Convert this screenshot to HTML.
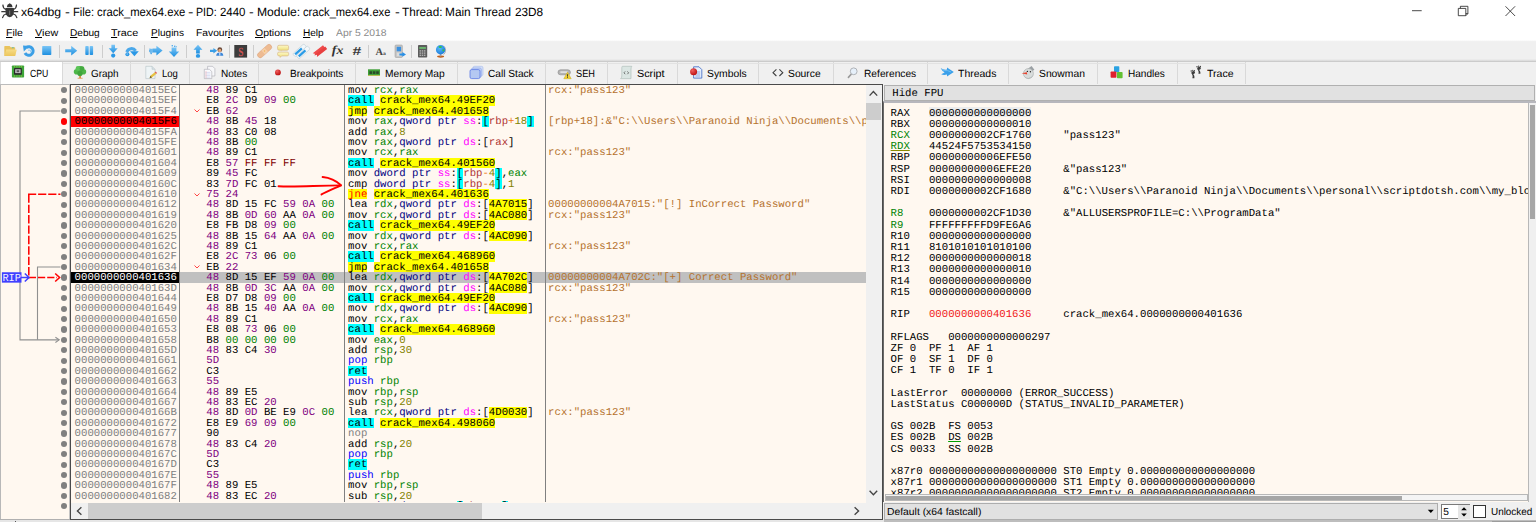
<!DOCTYPE html>
<html lang="en"><head><meta charset="utf-8"><title>x64dbg</title>
<style>
html,body{margin:0;padding:0}
body{width:1536px;height:522px;overflow:hidden;position:relative;background:#fff;text-rendering:geometricPrecision;font-family:"Liberation Sans","DejaVu Sans",sans-serif;color:#000}
div,span,svg{position:absolute}
.mi,.tt,.fx,.tw{transform-origin:0 0}
.tw{top:5px;font-size:12px;line-height:14px}
.m span,.rg span,.ui span{position:static}
.ui{white-space:pre;font-family:"Liberation Sans","DejaVu Sans",sans-serif}
.m{font-family:"Liberation Mono","DejaVu Sans Mono",monospace;font-size:10.667px;line-height:12.4px;height:10.4px;white-space:pre}
.rg{font-family:"Liberation Mono","DejaVu Sans Mono",monospace;font-size:10.667px;line-height:14.6px;height:11.2px;white-space:pre;left:890.6px}
.ad{left:74.6px;color:#808080}
.by{color:#000}
.ds{left:348.1px}
.co{left:548.1px;color:#b5722d}
.r{color:#008300}.z{color:#000080}.g{color:#ff00ff}.v{color:#828200}
.mb{color:#b03434}.mo{color:#f27711}.p{color:#0000ff}.n{color:#808080}
.cc,.ya,.yj,.yc,.sb{display:inline-block;height:10.4px;vertical-align:top}
.cc,.sb{background:#00ffff}.ya,.yj,.yc{background:#ffff00}.yc{color:#ff0000}
.b0{color:#008000}.bf{color:#800000}.bp{color:#800080}
.dot{width:6.2px;height:6.2px;border-radius:50%;background:#808080;left:61.3px}
.vl{width:0.9px;background:#808080}
.sep{width:0.9px;height:12.6px;top:45px;background:#cdcdcd}
.tab{top:62.2px;height:21.4px;border-right:0.8px solid #d9d9d9;box-sizing:border-box}
.tt{top:68.7px;font-size:10.4px;line-height:12px;white-space:pre}
.mi{top:27.9px;font-size:9.8px;line-height:12px;white-space:pre}
.mi u{text-decoration:underline;text-underline-offset:1px}
</style></head><body>
<div style="left:0;top:0;width:1536px;height:40.2px;background:#fff"></div>
<svg style="left:1px;top:2px" width="18" height="17" viewBox="1 2 18 17"><g stroke="#383838" stroke-width="1.25" fill="none" stroke-linecap="round"><path d="M6 9.4 Q3 8.6 2.9 5 M13.4 9.4 Q16.4 8.6 16.5 5 M5.4 11.7 H1.8 M14 11.7 H17.7 M6 14 Q3.4 14.6 2.6 17.6 M13.4 14 Q16 14.6 16.8 17.6"/></g><path d="M9.7 3.2 Q12.6 4.4 12.6 7.2 H6.8 Q6.8 4.4 9.7 3.2 Z" fill="#383838"/><path d="M5.5 8 H13.9 Q14.2 12 13.4 14.6 Q12 17.2 9.7 17.2 Q7.4 17.2 6 14.6 Q5.2 12 5.5 8 Z" fill="#383838"/><path d="M9.7 10.6 V15" stroke="#9a9a9a" stroke-width="0.7"/></svg>
<div class="ui tw" id="tw0" style="transform:scaleX(1.018);left:20.9px">x64dbg</div><div class="ui tw" id="tw1" style="transform:scaleX(1.225);left:64.9px">-</div><div class="ui tw" id="tw2" style="transform:scaleX(0.931);left:72.6px">File:</div><div class="ui tw" id="tw3" style="transform:scaleX(0.939);left:96.7px">crack_mex64.exe</div><div class="ui tw" id="tw4" style="transform:scaleX(1.350);left:188.0px">-</div><div class="ui tw" id="tw5" style="transform:scaleX(0.887);left:196.1px">PID:</div><div class="ui tw" id="tw6" style="transform:scaleX(0.955);left:220.0px">2440</div><div class="ui tw" id="tw7" style="transform:scaleX(1.175);left:249.3px">-</div><div class="ui tw" id="tw8" style="transform:scaleX(1.012);left:257.0px">Module:</div><div class="ui tw" id="tw9" style="transform:scaleX(0.929);left:303.2px">crack_mex64.exe</div><div class="ui tw" id="tw10" style="transform:scaleX(1.200);left:395.0px">-</div><div class="ui tw" id="tw11" style="transform:scaleX(0.977);left:402.4px">Thread:</div><div class="ui tw" id="tw12" style="transform:scaleX(0.988);left:445.4px">Main</div><div class="ui tw" id="tw13" style="transform:scaleX(0.973);left:474.1px">Thread</div><div class="ui tw" id="tw14" style="transform:scaleX(0.980);left:514.5px">23D8</div>
<svg style="left:1400px;top:0" width="136" height="24" viewBox="0 0 136 24"><g stroke="#2b2b2b" stroke-width="0.85" fill="none"><path d="M12 10.7 H21.7"/><path d="M58.3 8.4 H65.8 V15.7 H58.3 Z"/><path d="M60.4 8.4 V6.3 H67.9 V13.6 H65.8 M65.8 15.7 L67.9 13.6"/><path d="M105.5 6.3 L115.1 16 M115.1 6.3 L105.5 16"/></g></svg>
<div class="mi" id="mi0" style="transform:scaleX(1.070);left:5.8px"><u>F</u>ile</div><div class="mi" id="mi1" style="transform:scaleX(1.101);left:34.7px"><u>V</u>iew</div><div class="mi" id="mi2" style="transform:scaleX(1.029);left:70.0px"><u>D</u>ebug</div><div class="mi" id="mi3" style="transform:scaleX(1.102);left:111.2px"><u>T</u>race</div><div class="mi" id="mi4" style="transform:scaleX(1.026);left:150.7px"><u>P</u>lugins</div><div class="mi" id="mi5" style="transform:scaleX(1.049);left:195.7px">Favour<u>i</u>tes</div><div class="mi" id="mi6" style="transform:scaleX(1.066);left:255.2px"><u>O</u>ptions</div><div class="mi" id="mi7" style="transform:scaleX(1.027);left:302.7px"><u>H</u>elp</div><div class="mi" id="mi8" style="transform:scaleX(1.056);left:336px;color:#8a8a8a">Apr 5 2018</div>
<div style="left:0;top:39.6px;width:1536px;height:21.6px;background:linear-gradient(#fff,#f0f0f0 1.6px)"></div>
<div style="left:0;top:59.4px;width:1536px;height:2.8px;background:linear-gradient(#f0f0f0,#dcdcdc 55%,#c9c9c9 80%,#d4d4d4)"></div>
<div class="sep" style="left:58.6px"></div><div class="sep" style="left:101.6px"></div><div class="sep" style="left:143.6px"></div><div class="sep" style="left:186.1px"></div><div class="sep" style="left:229.0px"></div><div class="sep" style="left:253.1px"></div><div class="sep" style="left:368.0px"></div><div class="sep" style="left:411.1px"></div>
<svg style="left:0;top:40px" width="460" height="22" viewBox="0 40 460 22"><defs>
<linearGradient id="gb" x1="0" y1="0" x2="0" y2="1"><stop offset="0" stop-color="#7cc6f6"/><stop offset="1" stop-color="#1d8fe0"/></linearGradient>
<linearGradient id="gy" x1="0" y1="0" x2="0" y2="1"><stop offset="0" stop-color="#f7dc86"/><stop offset="1" stop-color="#ecc65c"/></linearGradient>
<linearGradient id="gn" x1="0" y1="0" x2="0" y2="1"><stop offset="0" stop-color="#fdf8c8"/><stop offset="1" stop-color="#efe07a"/></linearGradient>
<radialGradient id="gr" cx="0.35" cy="0.3" r="0.8"><stop offset="0" stop-color="#f06060"/><stop offset="1" stop-color="#b80808"/></radialGradient>
<radialGradient id="gg" cx="0.4" cy="0.35" r="0.8"><stop offset="0" stop-color="#55b8f8"/><stop offset="1" stop-color="#1270d8"/></radialGradient>
</defs><path d="M4.3 46.6 Q4.3 46 5 46 H9.6 L10.8 47.2 H14.6 Q15.2 47.2 15.2 47.8 V55.4 Q15.2 55.9 14.6 55.9 H5 Q4.3 55.9 4.3 55.4 Z" fill="#e9c35c"/><path d="M6.2 49.4 H16.3 Q16.9 49.4 16.7 50 L15.3 55.5 Q15.2 55.9 14.6 55.9 H4.6 Z" fill="url(#gy)"/><rect x="11.8" y="47.3" width="2" height="0.9" fill="#58b8a8"/><path d="M26.2 47.6 A4.3 4.3 0 1 1 25 53" fill="none" stroke="#3b9fe6" stroke-width="3"/><path d="M23 45.4 L29.4 46 L23.8 51.4 Z" fill="#3b9fe6"/><path d="M28 50.2 H30.6 V52.4" fill="none" stroke="#8cc8f4" stroke-width="1"/><rect x="42.2" y="45.9" width="9.1" height="9.1" rx="0.7" fill="url(#gb)"/><path d="M65.2 49.2 H71.2 V45.8 L77.2 50.7 L71.2 55.6 V52.3 H65.2 Z" fill="url(#gb)"/><rect x="85.3" y="45.9" width="3.4" height="9.1" rx="0.8" fill="url(#gb)"/><rect x="89.7" y="45.9" width="3.4" height="9.1" rx="0.8" fill="url(#gb)"/><path d="M111.4 44.8 H115 V48.3 H117.7 L113.2 53.2 L108.7 48.3 H111.4 Z" fill="url(#gb)"/><circle cx="113.2" cy="55.6" r="2.1" fill="#2a98e6"/><path d="M126.8 52 A5 5 0 0 1 135.6 50.8" fill="none" stroke="#4aa8ea" stroke-width="3.2"/><path d="M130 51.2 H138.8 L134.4 56.2 Z" fill="#2a98e6"/><circle cx="127.4" cy="54.3" r="2" fill="#2a98e6"/><circle cx="127.2" cy="54" r="0.8" fill="#8cc8f4"/><path d="M152.5 48.6 H156.4 V45.7 L162.6 50.6 L156.4 55.5 V52.6 H152.5 Z" fill="url(#gb)"/><path d="M149.2 48.4 L152.8 49 V52.4 L150 53.4 Z" fill="#58b0ee" opacity="0.85"/><rect x="149" y="50.4" width="1.2" height="1.2" fill="#3b9fe6"/><rect x="150.6" y="53" width="1.2" height="1.2" fill="#3b9fe6"/><path d="M171.6 47.4 H176.4 V51.4 H179.2 L174 57 L168.8 51.4 H171.6 Z" fill="url(#gb)"/><rect x="171.6" y="45" width="1.4" height="1.4" fill="#58b0ee"/><rect x="174" y="45.6" width="1.4" height="1.4" fill="#58b0ee"/><rect x="175.8" y="46.2" width="1" height="1" fill="#58b0ee"/><path d="M198 44.7 L202.4 49.7 H199.8 V53.4 H196.1 V49.7 H193.5 Z" fill="url(#gb)"/><ellipse cx="198" cy="55.9" rx="2.2" ry="1.9" fill="#2a98e6"/><path d="M210 49.8 H213.4 V48 L217.2 50.8 L213.4 53.5 V51.9 H210 Z" fill="#3b9fe6"/><path d="M216.2 55.8 Q216.2 52.4 219.8 52.4 Q223.3 52.4 223.3 55.8 Z" fill="#3b86d8"/><circle cx="219.8" cy="49.7" r="2.4" fill="#6a4a3a"/><ellipse cx="219.8" cy="50.5" rx="1.5" ry="1.8" fill="#e8a878"/><rect x="219.3" y="52.6" width="1" height="3" fill="#e8eef8"/><rect x="234.3" y="45" width="12.8" height="12.6" fill="#3c3c3c"/><text x="238.2" y="56" font-family="'Liberation Serif','DejaVu Serif',serif" font-weight="bold" font-size="12.5" fill="#cf5252" textLength="5.2" lengthAdjust="spacingAndGlyphs">S</text><g transform="rotate(-42 264.6 51.1)"><rect x="256" y="48.4" width="17.2" height="5.4" rx="2.7" fill="#eebb92" stroke="#d9a077" stroke-width="0.5"/><rect x="262.6" y="48.6" width="4" height="5" fill="#f6cfa8"/><rect x="264" y="50.4" width="1.2" height="1.2" fill="#f0b040"/></g><rect x="277.6" y="45.3" width="11" height="4.9" rx="1.4" fill="url(#gn)" stroke="#d9b98a" stroke-width="0.7"/><path d="M279 52.1 H287.2 Q288.6 52.1 288.6 53.4 V54.6 Q288.6 55.9 287.2 55.9 H281.6 L280.2 57.4 L280 55.9 H279 Q277.6 55.9 277.6 54.6 V53.4 Q277.6 52.1 279 52.1 Z" fill="url(#gn)" stroke="#d9b98a" stroke-width="0.7"/><path d="M280.4 50.2 L281 51.6 L282.4 50.2 Z" fill="#e6cf90"/><g transform="rotate(-42 299.6 50.4)"><rect x="292" y="48.3" width="15.2" height="4.2" rx="1.4" fill="#f2f7fa" stroke="#b4c6d0" stroke-width="0.5"/><rect x="293.6" y="49.3" width="9" height="2.2" fill="#2a9be6"/></g><g transform="rotate(-42 303.2 52.4)"><rect x="295.6" y="50.3" width="15.2" height="4.2" rx="1.4" fill="#f2f7fa" stroke="#b4c6d0" stroke-width="0.5"/><rect x="297.2" y="51.3" width="9" height="2.2" fill="#2a9be6"/></g><g transform="rotate(-38 319 50.6)"><path d="M312.4 48.9 H325.4 V52.1 H312.4 L313.8 50.5 Z" fill="#ee4a4a"/></g><g transform="rotate(-38 321.2 51.8)"><path d="M314.6 50.1 H327.6 V53.3 H314.6 L316 51.7 Z" fill="#e84040"/></g><text x="331.8" y="54.3" font-family="'Liberation Serif','DejaVu Serif',serif" font-style="italic" font-weight="bold" font-size="12" fill="#333" textLength="11.6" lengthAdjust="spacingAndGlyphs">fx</text><text x="352.2" y="55.3" font-family="'Liberation Sans','DejaVu Sans',sans-serif" font-style="italic" font-weight="bold" font-size="11.6" fill="#3a3a3a" textLength="8.8" lengthAdjust="spacingAndGlyphs">#</text><text x="375.6" y="54.7" font-family="'Liberation Serif','DejaVu Serif',serif" font-weight="bold" font-size="10.4" fill="#444">A</text><text x="383" y="54.7" font-family="'Liberation Serif','DejaVu Serif',serif" font-weight="bold" font-size="5.6" fill="#444">a</text><rect x="395" y="45" width="7.4" height="12.5" rx="1" fill="#c4c4c4" stroke="#9a9a9a" stroke-width="0.5"/><rect x="396.7" y="46.8" width="4.4" height="4.5" fill="#3a90e0"/><rect x="396.8" y="52.6" width="4" height="3.6" fill="#dcdcdc"/><path d="M399.4 53.4 H402.4 V52 L406 54.4 L402.4 56.8 V55.4 H399.4 Z" fill="#2a90e6"/><rect x="418" y="45" width="9.2" height="12.5" rx="0.8" fill="#5c5c5c"/><rect x="419.3" y="47.1" width="6.6" height="1.7" fill="#6cc070"/><rect x="419.5" y="50.2" width="1.5" height="1.4" fill="#b0b0b0"/><rect x="421.7" y="50.2" width="1.5" height="1.4" fill="#b0b0b0"/><rect x="423.9" y="50.2" width="1.5" height="1.4" fill="#b0b0b0"/><rect x="419.5" y="52.4" width="1.5" height="1.4" fill="#b0b0b0"/><rect x="421.7" y="52.4" width="1.5" height="1.4" fill="#b0b0b0"/><rect x="423.9" y="52.4" width="1.5" height="1.4" fill="#b0b0b0"/><rect x="419.5" y="54.6" width="1.5" height="1.4" fill="#b0b0b0"/><rect x="421.7" y="54.6" width="1.5" height="1.4" fill="#b0b0b0"/><rect x="423.9" y="54.6" width="1.5" height="1.4" fill="#b0b0b0"/><path d="M443.2 45.6 A5.6 5.6 0 0 1 443.6 54.6" fill="none" stroke="#b0b0b0" stroke-width="0.9"/><ellipse cx="440.6" cy="56.6" rx="3.5" ry="1.1" fill="#c0601c"/><rect x="439.8" y="54" width="1.6" height="2.4" fill="#a0a0a0"/><circle cx="440.6" cy="49.7" r="4.7" fill="url(#gg)"/><path d="M438.6 46.2 Q441 45.4 442.2 46.8 Q441.6 48.4 439.8 48 Q438.4 47.6 438.6 46.2 Z M442.6 49 Q444.4 49 444.4 50.6 Q443.6 52 442.4 51 Z" fill="#30c050"/></svg>

<div style="left:0;top:62.2px;width:1536px;height:22.5px;background:#f0f0f0"></div>
<div style="left:0;top:83.7px;width:883px;height:0.8px;background:#bcbcbc"></div>
<div class="tab" style="left:0px;width:62.5px;background:#fff"></div><div class="tab" style="left:62.5px;width:68.7px;background:#f0f0f0"></div><div class="tab" style="left:131.2px;width:59.3px;background:#f0f0f0"></div><div class="tab" style="left:190.5px;width:68.5px;background:#f0f0f0"></div><div class="tab" style="left:259px;width:96.5px;background:#f0f0f0"></div><div class="tab" style="left:355.5px;width:102.0px;background:#f0f0f0"></div><div class="tab" style="left:457.5px;width:88.0px;background:#f0f0f0"></div><div class="tab" style="left:545.5px;width:62.0px;background:#f0f0f0"></div><div class="tab" style="left:607.5px;width:70.0px;background:#f0f0f0"></div><div class="tab" style="left:677.5px;width:81.2px;background:#f0f0f0"></div><div class="tab" style="left:758.7px;width:75.0px;background:#f0f0f0"></div><div class="tab" style="left:833.7px;width:94.3px;background:#f0f0f0"></div><div class="tab" style="left:928px;width:81.0px;background:#f0f0f0"></div><div class="tab" style="left:1009px;width:89.0px;background:#f0f0f0"></div><div class="tab" style="left:1098px;width:79.5px;background:#f0f0f0"></div><div class="tab" style="left:1177.5px;width:68.0px;background:#f0f0f0"></div>
<div style="left:62.5px;top:63.2px;width:1183px;height:0.7px;background:#e2e2e2"></div>
<div class="tt" id="tt0" style="transform:scaleX(0.838);left:29.5px">CPU</div><div class="tt" id="tt1" style="transform:scaleX(0.955);left:91.0px">Graph</div><div class="tt" id="tt2" style="transform:scaleX(0.917);left:161.5px">Log</div><div class="tt" id="tt3" style="transform:scaleX(0.965);left:220.5px">Notes</div><div class="tt" id="tt4" style="transform:scaleX(0.973);left:289.5px">Breakpoints</div><div class="tt" id="tt5" style="transform:scaleX(0.985);left:385.2px">Memory Map</div><div class="tt" id="tt6" style="transform:scaleX(0.977);left:487.7px">Call Stack</div><div class="tt" id="tt7" style="transform:scaleX(0.884);left:575.7px">SEH</div><div class="tt" id="tt8" style="transform:scaleX(1.039);left:637.0px">Script</div><div class="tt" id="tt9" style="transform:scaleX(0.994);left:707.0px">Symbols</div><div class="tt" id="tt10" style="transform:scaleX(0.993);left:788.2px">Source</div><div class="tt" id="tt11" style="transform:scaleX(0.982);left:863.7px">References</div><div class="tt" id="tt12" style="transform:scaleX(1.007);left:958.2px">Threads</div><div class="tt" id="tt13" style="transform:scaleX(0.993);left:1039.0px">Snowman</div><div class="tt" id="tt14" style="transform:scaleX(0.968);left:1127.7px">Handles</div><div class="tt" id="tt15" style="transform:scaleX(1.016);left:1207.0px">Trace</div><div style="left:0;top:62.2px;width:1px;height:22.3px;background:#dcdcdc"></div>
<svg style="left:0;top:62px" width="1250" height="22" viewBox="0 62 1250 22"><rect x="11.9" y="65.4" width="12.2" height="12.2" rx="0.8" fill="#3ea63a"/><rect x="14" y="67.9" width="7.8" height="6.8" rx="0.8" fill="#2a2a2a"/><rect x="15.2" y="69.3" width="5.4" height="3.8" fill="#c4c4c4"/><rect x="16.6" y="70.2" width="2.6" height="2" fill="#555"/><rect x="14.2" y="66.4" width="0.8" height="0.8" fill="#d8c848"/><rect x="14.2" y="75.6" width="0.8" height="0.8" fill="#d8c848"/><rect x="16.5" y="66.4" width="0.8" height="0.8" fill="#d8c848"/><rect x="16.5" y="75.6" width="0.8" height="0.8" fill="#d8c848"/><rect x="18.8" y="66.4" width="0.8" height="0.8" fill="#d8c848"/><rect x="18.8" y="75.6" width="0.8" height="0.8" fill="#d8c848"/><rect x="21.1" y="66.4" width="0.8" height="0.8" fill="#d8c848"/><rect x="21.1" y="75.6" width="0.8" height="0.8" fill="#d8c848"/><rect x="79.2" y="74.6" width="1.8" height="3.6" fill="#d08a3c"/><rect x="77.6" y="77.8" width="5" height="0.9" fill="#d9a060"/><circle cx="80" cy="70" r="3.9" fill="#4cb648"/><circle cx="76.6" cy="71.8" r="2.8" fill="#4cb648"/><circle cx="83.4" cy="71.8" r="2.8" fill="#4cb648"/><circle cx="78" cy="68.4" r="2.4" fill="#5cc458"/><circle cx="82" cy="68.6" r="2.4" fill="#44aa40"/><circle cx="80" cy="73.4" r="2.6" fill="#40a43c"/><path d="M145.8 66.3 H152 L155 69.3 V78.6 H145.8 Z" fill="#eef4f6" stroke="#b4c0c4" stroke-width="0.6"/><path d="M152 66.3 V69.3 H155" fill="#d4dfe3" stroke="#b4c0c4" stroke-width="0.5"/><path d="M149.6 78.2 L150.4 75.8 L154.8 72.2 L156.4 73.8 L152 77.6 Z" fill="#e6c244"/><path d="M154.8 72.2 L155.6 71.6 L157 73 L156.4 73.8 Z" fill="#e04848"/><path d="M149.6 78.2 L150.4 75.8 L152 77.6 Z" fill="#6a5a3a"/><path d="M207.6 66.3 H212.6 L214.9 68.6 V76 H207.6 Z" fill="#f8f8fa" stroke="#a8a8b0" stroke-width="0.6"/><path d="M204.3 69.3 H209.4 L211.8 71.6 V78.6 H204.3 Z" fill="#fafafc" stroke="#a8a8b0" stroke-width="0.6"/><path d="M205.4 72.4 H210.4 M205.4 74 H210.4 M205.4 75.6 H210.4 M205.4 77.2 H210.4" stroke="#b8c4e8" stroke-width="0.5"/><path d="M206 71 V78.2" stroke="#f0a0a0" stroke-width="0.5"/><circle cx="277.9" cy="72.4" r="2.9" fill="url(#gr)"/><rect x="368" y="69.3" width="12" height="6.4" fill="#3f9e38"/><rect x="369.4" y="71.3" width="2.6" height="2.6" fill="#2a4a2a"/><rect x="372.8" y="71.3" width="2.6" height="2.6" fill="#2a4a2a"/><rect x="376.2" y="71.3" width="2.6" height="2.6" fill="#2a4a2a"/><rect x="368" y="75" width="12" height="0.8" fill="#c8c050"/><rect x="473" y="66.3" width="10" height="9.4" rx="1.6" fill="#d4e0f6" stroke="#a4b8ec" stroke-width="0.6"/><rect x="471.4" y="68" width="10" height="9.4" rx="1.6" fill="#c0d0f4" stroke="#8ca4ec" stroke-width="0.6"/><rect x="470" y="69.6" width="10" height="9" rx="1.6" fill="#b4c8f2" stroke="#5a78e4" stroke-width="0.8"/><rect x="558" y="69.8" width="12.4" height="5" rx="2.5" fill="#b4b4b4" stroke="#8a8a8a" stroke-width="0.6"/><rect x="560.4" y="71.4" width="7" height="1.4" fill="#ececec"/><path d="M567.5 72.2 L571.2 78.7 H563.8 Z" fill="#f0d030" stroke="#c8a818" stroke-width="0.5"/><rect x="567.1" y="74.2" width="0.9" height="2.4" fill="#333"/><rect x="567.1" y="77.1" width="0.9" height="0.8" fill="#333"/><path d="M622.4 66.3 H631.8 Q631 67.6 631 69 V78.6 H620.6 Q621.8 77.6 621.8 76 V67.6 Q621.8 66.6 622.4 66.3 Z" fill="#dbe6e3" stroke="#a8b8b4" stroke-width="0.6"/><path d="M625.2 71.4 L624 72.8 L625.2 74.2 M627.4 71.4 L628.6 72.8 L627.4 74.2" fill="none" stroke="#444" stroke-width="0.7"/><path d="M693.6 66.8 H699 L701.8 69.6 V78.1 H693.6 Z" fill="#e8f0fc" stroke="#3a66c4" stroke-width="0.8"/><path d="M696.8 72 H700.2 M696.8 74 H700.2 M695.4 76 H700.2" stroke="#6a8cd8" stroke-width="0.7"/><circle cx="693.6" cy="71.8" r="3.5" fill="url(#gr)"/><path d="M776.4 69.4 L773 72.7 L776.4 76 M779.4 69.4 L782.8 72.7 L779.4 76" fill="none" stroke="#404040" stroke-width="1.1"/><path d="M851.4 74 L848.4 77.4" stroke="#9a9a9a" stroke-width="1.6" stroke-linecap="round"/><circle cx="853.7" cy="71.3" r="3.4" fill="#e6f0fa" stroke="#a8acb0" stroke-width="0.9"/><path d="M940.6 68 Q943.4 70.2 947 69.6 V67.4 L953.8 72 L947 76.6 V74.6 Q943.4 75.6 941.2 74.2 Q943.6 73.4 944.6 72.2 Q942 71.2 940.6 68 Z" fill="#3aa0ea"/><path d="M942 69.6 Q944.4 71 947.6 70.6 L951 72" fill="none" stroke="#7cc4f4" stroke-width="0.8"/><path d="M1027.8 68.8 L1031.6 66 L1034.4 69.8 L1031.6 71.8 Z" fill="#9aa0a4"/><circle cx="1028.4" cy="73.6" r="5" fill="#d8dcdc" stroke="#a4aaaa" stroke-width="0.6"/><path d="M1024.6 76.8 A5 5 0 0 0 1033.2 74.6 A5.6 5.6 0 0 1 1024.6 76.8 Z" fill="#a8aeae"/><path d="M1027.2 74.6 L1021.6 73.2 L1027 72.2 Z" fill="#e8402c"/><circle cx="1027.4" cy="71.4" r="0.7" fill="#2a2a2a"/><circle cx="1030.4" cy="71.8" r="0.7" fill="#2a2a2a"/><rect x="1114" y="66.2" width="5.3" height="5.8" rx="0.8" fill="#2aa2e2"/><rect x="1110.6" y="71.4" width="5.8" height="6.3" rx="0.8" fill="#e0202e"/><rect x="1116.9" y="71.9" width="5.7" height="6.3" rx="0.8" fill="#62c032"/><g fill="#3c3c3c"><ellipse cx="1193.2" cy="72.6" rx="1.9" ry="1.4" transform="rotate(-20 1193.2 72.6)"/><path d="M1191.8 73.6 Q1194.8 74.2 1194.4 78.2 H1192.4 Q1193 75.6 1191.8 73.6 Z"/><circle cx="1191.2" cy="71" r="0.7"/><circle cx="1192.8" cy="70.4" r="0.6"/><circle cx="1194.4" cy="70.6" r="0.6"/><ellipse cx="1199" cy="68.4" rx="1.9" ry="1.4" transform="rotate(-20 1199 68.4)"/><path d="M1197.8 69.4 Q1200.8 70 1200.4 73.8 H1198.4 Q1199 71.4 1197.8 69.4 Z"/><circle cx="1197" cy="66.8" r="0.7"/><circle cx="1198.6" cy="66.2" r="0.6"/><circle cx="1200.4" cy="66.4" r="0.6"/></g></svg>

<div style="left:0;top:84.5px;width:1536px;height:437.5px;background:#f0f0f0"></div>
<div style="left:0;top:84.5px;width:70.4px;height:435.3px;background:#fff8f0"></div>
<div style="left:0;top:84.5px;width:1.1px;height:435.3px;background:#b8b8b8"></div>
<div style="left:69.1px;top:84.5px;width:1px;height:435px;background:#c4c4c4"></div>
<div style="left:0;top:519.4px;width:71px;height:0.9px;background:#b0b0b0"></div>
<div id="dis" style="left:70px;top:84.2px;width:812.6px;height:435.6px;background:#fff8f0;border:1px solid #4a4a4a;box-sizing:border-box;overflow:hidden"></div>
<div id="rows" style="left:0;top:0;width:866.2px;height:502.3px;overflow:hidden">
<div style="left:71px;top:272.25px;width:795.2px;height:10.4px;background:#c0c0c0"></div><div style="left:71px;top:272.25px;width:108.4px;height:10.4px;background:#000"></div><div style="left:71px;top:116.25px;width:108.4px;height:10.4px;background:#ff0000"></div>
<div class="vl" style="left:178.95px;top:85px;height:418px"></div><div class="vl" style="left:343.95px;top:85px;height:418px"></div><div class="vl" style="left:545.15px;top:85px;height:418px"></div>
<div class="m ad" style="top:85.05px">00000000004015EC</div><div class="m by bp" style="left:206.3px;top:85.05px">48</div><div class="m by" style="left:225.5px;top:85.05px">89</div><div class="m by" style="left:244.7px;top:85.05px">C1</div><div class="m ds" style="top:85.05px">mov <span class="r">rcx</span>,<span class="r">rax</span></div><div class="m co" style="top:85.05px">rcx:"pass123"</div>
<div class="m ad" style="top:95.45px">00000000004015EF</div><div class="m by" style="left:206.3px;top:95.45px">E8</div><div class="m by bp" style="left:225.5px;top:95.45px">2C</div><div class="m by" style="left:244.7px;top:95.45px">D9</div><div class="m by bp" style="left:263.9px;top:95.45px">09</div><div class="m by b0" style="left:283.1px;top:95.45px">00</div><div class="m ds" style="top:95.45px"><span class="cc">call</span> <span class="ya">crack_mex64.49EF20</span></div>
<div class="m ad" style="top:105.85px">00000000004015F4</div><div class="m by" style="left:206.3px;top:105.85px">EB</div><div class="m by bp" style="left:225.5px;top:105.85px">62</div><svg style="left:193.6px;top:109.45px" width="6" height="4" viewBox="0 0 6 4"><path d="M0.5 0.5 L3 3 L5.5 0.5" stroke="#ff3030" stroke-width="0.9" fill="none"/></svg><div class="m ds" style="top:105.85px"><span class="yj">jmp</span> <span class="ya">crack_mex64.401658</span></div>
<div class="m ad" style="top:116.25px;color:#000">00000000004015F6</div><div class="m by bp" style="left:206.3px;top:116.25px">48</div><div class="m by" style="left:225.5px;top:116.25px">8B</div><div class="m by bp" style="left:244.7px;top:116.25px">45</div><div class="m by" style="left:263.9px;top:116.25px">18</div><div class="m ds" style="top:116.25px">mov <span class="r">rax</span>,<span class="z">qword ptr</span> <span class="g">ss</span>:<span class="sb">[</span><span class="mb">rbp</span><span class="mo">+</span><span class="v">18</span><span class="sb">]</span></div><div class="m co" style="top:116.25px">[rbp+18]:&amp;"C:\\Users\\Paranoid Ninja\\Documents\\p</div>
<div class="m ad" style="top:126.65px">00000000004015FA</div><div class="m by bp" style="left:206.3px;top:126.65px">48</div><div class="m by" style="left:225.5px;top:126.65px">83</div><div class="m by" style="left:244.7px;top:126.65px">C0</div><div class="m by" style="left:263.9px;top:126.65px">08</div><div class="m ds" style="top:126.65px">add <span class="r">rax</span>,<span class="v">8</span></div>
<div class="m ad" style="top:137.05px">00000000004015FE</div><div class="m by bp" style="left:206.3px;top:137.05px">48</div><div class="m by" style="left:225.5px;top:137.05px">8B</div><div class="m by b0" style="left:244.7px;top:137.05px">00</div><div class="m ds" style="top:137.05px">mov <span class="r">rax</span>,<span class="z">qword ptr</span> <span class="g">ds</span>:[<span class="mb">rax</span>]</div>
<div class="m ad" style="top:147.45px">0000000000401601</div><div class="m by bp" style="left:206.3px;top:147.45px">48</div><div class="m by" style="left:225.5px;top:147.45px">89</div><div class="m by" style="left:244.7px;top:147.45px">C1</div><div class="m ds" style="top:147.45px">mov <span class="r">rcx</span>,<span class="r">rax</span></div><div class="m co" style="top:147.45px">rcx:"pass123"</div>
<div class="m ad" style="top:157.85px">0000000000401604</div><div class="m by" style="left:206.3px;top:157.85px">E8</div><div class="m by bp" style="left:225.5px;top:157.85px">57</div><div class="m by bf" style="left:244.7px;top:157.85px">FF</div><div class="m by bf" style="left:263.9px;top:157.85px">FF</div><div class="m by bf" style="left:283.1px;top:157.85px">FF</div><div class="m ds" style="top:157.85px"><span class="cc">call</span> <span class="ya">crack_mex64.401560</span></div>
<div class="m ad" style="top:168.25px">0000000000401609</div><div class="m by" style="left:206.3px;top:168.25px">89</div><div class="m by bp" style="left:225.5px;top:168.25px">45</div><div class="m by" style="left:244.7px;top:168.25px">FC</div><div class="m ds" style="top:168.25px">mov <span class="z">dword ptr</span> <span class="g">ss</span>:<span class="sb">[</span><span class="mb">rbp</span><span class="mo">-</span><span class="v">4</span><span class="sb">]</span>,<span class="r">eax</span></div>
<div class="m ad" style="top:178.65px">000000000040160C</div><div class="m by" style="left:206.3px;top:178.65px">83</div><div class="m by bp" style="left:225.5px;top:178.65px">7D</div><div class="m by" style="left:244.7px;top:178.65px">FC</div><div class="m by" style="left:263.9px;top:178.65px">01</div><div class="m ds" style="top:178.65px">cmp <span class="z">dword ptr</span> <span class="g">ss</span>:<span class="sb">[</span><span class="mb">rbp</span><span class="mo">-</span><span class="v">4</span><span class="sb">]</span>,<span class="v">1</span></div>
<div class="m ad" style="top:189.05px">0000000000401610</div><div class="m by bp" style="left:206.3px;top:189.05px">75</div><div class="m by bp" style="left:225.5px;top:189.05px">24</div><svg style="left:193.6px;top:192.65px" width="6" height="4" viewBox="0 0 6 4"><path d="M0.5 0.5 L3 3 L5.5 0.5" stroke="#ff3030" stroke-width="0.9" fill="none"/></svg><div class="m ds" style="top:189.05px"><span class="yc">jne</span> <span class="ya">crack_mex64.401636</span></div>
<div class="m ad" style="top:199.45px">0000000000401612</div><div class="m by bp" style="left:206.3px;top:199.45px">48</div><div class="m by" style="left:225.5px;top:199.45px">8D</div><div class="m by" style="left:244.7px;top:199.45px">15</div><div class="m by" style="left:263.9px;top:199.45px">FC</div><div class="m by bp" style="left:283.1px;top:199.45px">59</div><div class="m by bp" style="left:302.3px;top:199.45px">0A</div><div class="m by b0" style="left:321.5px;top:199.45px">00</div><div class="m ds" style="top:199.45px">lea <span class="r">rdx</span>,<span class="z">qword ptr</span> <span class="g">ds</span>:[<span class="ya">4A7015</span>]</div><div class="m co" style="top:199.45px">00000000004A7015:"[!] InCorrect Password"</div>
<div class="m ad" style="top:209.85px">0000000000401619</div><div class="m by bp" style="left:206.3px;top:209.85px">48</div><div class="m by" style="left:225.5px;top:209.85px">8B</div><div class="m by bp" style="left:244.7px;top:209.85px">0D</div><div class="m by bp" style="left:263.9px;top:209.85px">60</div><div class="m by" style="left:283.1px;top:209.85px">AA</div><div class="m by bp" style="left:302.3px;top:209.85px">0A</div><div class="m by b0" style="left:321.5px;top:209.85px">00</div><div class="m ds" style="top:209.85px">mov <span class="r">rcx</span>,<span class="z">qword ptr</span> <span class="g">ds</span>:[<span class="ya">4AC080</span>]</div><div class="m co" style="top:209.85px">rcx:"pass123"</div>
<div class="m ad" style="top:220.25px">0000000000401620</div><div class="m by" style="left:206.3px;top:220.25px">E8</div><div class="m by" style="left:225.5px;top:220.25px">FB</div><div class="m by" style="left:244.7px;top:220.25px">D8</div><div class="m by bp" style="left:263.9px;top:220.25px">09</div><div class="m by b0" style="left:283.1px;top:220.25px">00</div><div class="m ds" style="top:220.25px"><span class="cc">call</span> <span class="ya">crack_mex64.49EF20</span></div>
<div class="m ad" style="top:230.65px">0000000000401625</div><div class="m by bp" style="left:206.3px;top:230.65px">48</div><div class="m by" style="left:225.5px;top:230.65px">8B</div><div class="m by" style="left:244.7px;top:230.65px">15</div><div class="m by bp" style="left:263.9px;top:230.65px">64</div><div class="m by" style="left:283.1px;top:230.65px">AA</div><div class="m by bp" style="left:302.3px;top:230.65px">0A</div><div class="m by b0" style="left:321.5px;top:230.65px">00</div><div class="m ds" style="top:230.65px">mov <span class="r">rdx</span>,<span class="z">qword ptr</span> <span class="g">ds</span>:[<span class="ya">4AC090</span>]</div>
<div class="m ad" style="top:241.05px">000000000040162C</div><div class="m by bp" style="left:206.3px;top:241.05px">48</div><div class="m by" style="left:225.5px;top:241.05px">89</div><div class="m by" style="left:244.7px;top:241.05px">C1</div><div class="m ds" style="top:241.05px">mov <span class="r">rcx</span>,<span class="r">rax</span></div><div class="m co" style="top:241.05px">rcx:"pass123"</div>
<div class="m ad" style="top:251.45px">000000000040162F</div><div class="m by" style="left:206.3px;top:251.45px">E8</div><div class="m by bp" style="left:225.5px;top:251.45px">2C</div><div class="m by bp" style="left:244.7px;top:251.45px">73</div><div class="m by" style="left:263.9px;top:251.45px">06</div><div class="m by b0" style="left:283.1px;top:251.45px">00</div><div class="m ds" style="top:251.45px"><span class="cc">call</span> <span class="ya">crack_mex64.468960</span></div>
<div class="m ad" style="top:261.85px">0000000000401634</div><div class="m by" style="left:206.3px;top:261.85px">EB</div><div class="m by bp" style="left:225.5px;top:261.85px">22</div><svg style="left:193.6px;top:265.45px" width="6" height="4" viewBox="0 0 6 4"><path d="M0.5 0.5 L3 3 L5.5 0.5" stroke="#ff3030" stroke-width="0.9" fill="none"/></svg><div class="m ds" style="top:261.85px"><span class="yj">jmp</span> <span class="ya">crack_mex64.401658</span></div>
<div class="m ad" style="top:272.25px;color:#fff">0000000000401636</div><div class="m by bp" style="left:206.3px;top:272.25px">48</div><div class="m by" style="left:225.5px;top:272.25px">8D</div><div class="m by" style="left:244.7px;top:272.25px">15</div><div class="m by" style="left:263.9px;top:272.25px">EF</div><div class="m by bp" style="left:283.1px;top:272.25px">59</div><div class="m by bp" style="left:302.3px;top:272.25px">0A</div><div class="m by b0" style="left:321.5px;top:272.25px">00</div><div class="m ds" style="top:272.25px">lea <span class="r">rdx</span>,<span class="z">qword ptr</span> <span class="g">ds</span>:[<span class="ya">4A702C</span>]</div><div class="m co" style="top:272.25px">00000000004A702C:"[+] Correct Password"</div>
<div class="m ad" style="top:282.65px">000000000040163D</div><div class="m by bp" style="left:206.3px;top:282.65px">48</div><div class="m by" style="left:225.5px;top:282.65px">8B</div><div class="m by bp" style="left:244.7px;top:282.65px">0D</div><div class="m by bp" style="left:263.9px;top:282.65px">3C</div><div class="m by" style="left:283.1px;top:282.65px">AA</div><div class="m by bp" style="left:302.3px;top:282.65px">0A</div><div class="m by b0" style="left:321.5px;top:282.65px">00</div><div class="m ds" style="top:282.65px">mov <span class="r">rcx</span>,<span class="z">qword ptr</span> <span class="g">ds</span>:[<span class="ya">4AC080</span>]</div><div class="m co" style="top:282.65px">rcx:"pass123"</div>
<div class="m ad" style="top:293.05px">0000000000401644</div><div class="m by" style="left:206.3px;top:293.05px">E8</div><div class="m by" style="left:225.5px;top:293.05px">D7</div><div class="m by" style="left:244.7px;top:293.05px">D8</div><div class="m by bp" style="left:263.9px;top:293.05px">09</div><div class="m by b0" style="left:283.1px;top:293.05px">00</div><div class="m ds" style="top:293.05px"><span class="cc">call</span> <span class="ya">crack_mex64.49EF20</span></div>
<div class="m ad" style="top:303.45px">0000000000401649</div><div class="m by bp" style="left:206.3px;top:303.45px">48</div><div class="m by" style="left:225.5px;top:303.45px">8B</div><div class="m by" style="left:244.7px;top:303.45px">15</div><div class="m by bp" style="left:263.9px;top:303.45px">40</div><div class="m by" style="left:283.1px;top:303.45px">AA</div><div class="m by bp" style="left:302.3px;top:303.45px">0A</div><div class="m by b0" style="left:321.5px;top:303.45px">00</div><div class="m ds" style="top:303.45px">mov <span class="r">rdx</span>,<span class="z">qword ptr</span> <span class="g">ds</span>:[<span class="ya">4AC090</span>]</div>
<div class="m ad" style="top:313.85px">0000000000401650</div><div class="m by bp" style="left:206.3px;top:313.85px">48</div><div class="m by" style="left:225.5px;top:313.85px">89</div><div class="m by" style="left:244.7px;top:313.85px">C1</div><div class="m ds" style="top:313.85px">mov <span class="r">rcx</span>,<span class="r">rax</span></div><div class="m co" style="top:313.85px">rcx:"pass123"</div>
<div class="m ad" style="top:324.25px">0000000000401653</div><div class="m by" style="left:206.3px;top:324.25px">E8</div><div class="m by" style="left:225.5px;top:324.25px">08</div><div class="m by bp" style="left:244.7px;top:324.25px">73</div><div class="m by" style="left:263.9px;top:324.25px">06</div><div class="m by b0" style="left:283.1px;top:324.25px">00</div><div class="m ds" style="top:324.25px"><span class="cc">call</span> <span class="ya">crack_mex64.468960</span></div>
<div class="m ad" style="top:334.65px">0000000000401658</div><div class="m by" style="left:206.3px;top:334.65px">B8</div><div class="m by b0" style="left:225.5px;top:334.65px">00</div><div class="m by b0" style="left:244.7px;top:334.65px">00</div><div class="m by b0" style="left:263.9px;top:334.65px">00</div><div class="m by b0" style="left:283.1px;top:334.65px">00</div><div class="m ds" style="top:334.65px">mov <span class="r">eax</span>,<span class="v">0</span></div>
<div class="m ad" style="top:345.05px">000000000040165D</div><div class="m by bp" style="left:206.3px;top:345.05px">48</div><div class="m by" style="left:225.5px;top:345.05px">83</div><div class="m by" style="left:244.7px;top:345.05px">C4</div><div class="m by bp" style="left:263.9px;top:345.05px">30</div><div class="m ds" style="top:345.05px">add <span class="r">rsp</span>,<span class="v">30</span></div>
<div class="m ad" style="top:355.45px">0000000000401661</div><div class="m by bp" style="left:206.3px;top:355.45px">5D</div><div class="m ds" style="top:355.45px"><span class="p">pop</span> <span class="r">rbp</span></div>
<div class="m ad" style="top:365.85px">0000000000401662</div><div class="m by" style="left:206.3px;top:365.85px">C3</div><div class="m ds" style="top:365.85px"><span class="cc">ret</span></div>
<div class="m ad" style="top:376.25px">0000000000401663</div><div class="m by bp" style="left:206.3px;top:376.25px">55</div><div class="m ds" style="top:376.25px"><span class="p">push</span> <span class="r">rbp</span></div>
<div class="m ad" style="top:386.65px">0000000000401664</div><div class="m by bp" style="left:206.3px;top:386.65px">48</div><div class="m by" style="left:225.5px;top:386.65px">89</div><div class="m by" style="left:244.7px;top:386.65px">E5</div><div class="m ds" style="top:386.65px">mov <span class="r">rbp</span>,<span class="r">rsp</span></div>
<div class="m ad" style="top:397.05px">0000000000401667</div><div class="m by bp" style="left:206.3px;top:397.05px">48</div><div class="m by" style="left:225.5px;top:397.05px">83</div><div class="m by" style="left:244.7px;top:397.05px">EC</div><div class="m by bp" style="left:263.9px;top:397.05px">20</div><div class="m ds" style="top:397.05px">sub <span class="r">rsp</span>,<span class="v">20</span></div>
<div class="m ad" style="top:407.45px">000000000040166B</div><div class="m by bp" style="left:206.3px;top:407.45px">48</div><div class="m by" style="left:225.5px;top:407.45px">8D</div><div class="m by bp" style="left:244.7px;top:407.45px">0D</div><div class="m by" style="left:263.9px;top:407.45px">BE</div><div class="m by" style="left:283.1px;top:407.45px">E9</div><div class="m by bp" style="left:302.3px;top:407.45px">0C</div><div class="m by b0" style="left:321.5px;top:407.45px">00</div><div class="m ds" style="top:407.45px">lea <span class="r">rcx</span>,<span class="z">qword ptr</span> <span class="g">ds</span>:[<span class="ya">4D0030</span>]</div><div class="m co" style="top:407.45px">rcx:"pass123"</div>
<div class="m ad" style="top:417.85px">0000000000401672</div><div class="m by" style="left:206.3px;top:417.85px">E8</div><div class="m by" style="left:225.5px;top:417.85px">E9</div><div class="m by bp" style="left:244.7px;top:417.85px">69</div><div class="m by bp" style="left:263.9px;top:417.85px">09</div><div class="m by b0" style="left:283.1px;top:417.85px">00</div><div class="m ds" style="top:417.85px"><span class="cc">call</span> <span class="ya">crack_mex64.498060</span></div>
<div class="m ad" style="top:428.25px">0000000000401677</div><div class="m by" style="left:206.3px;top:428.25px">90</div><div class="m ds" style="top:428.25px"><span class="n">nop</span></div>
<div class="m ad" style="top:438.65px">0000000000401678</div><div class="m by bp" style="left:206.3px;top:438.65px">48</div><div class="m by" style="left:225.5px;top:438.65px">83</div><div class="m by" style="left:244.7px;top:438.65px">C4</div><div class="m by bp" style="left:263.9px;top:438.65px">20</div><div class="m ds" style="top:438.65px">add <span class="r">rsp</span>,<span class="v">20</span></div>
<div class="m ad" style="top:449.05px">000000000040167C</div><div class="m by bp" style="left:206.3px;top:449.05px">5D</div><div class="m ds" style="top:449.05px"><span class="p">pop</span> <span class="r">rbp</span></div>
<div class="m ad" style="top:459.45px">000000000040167D</div><div class="m by" style="left:206.3px;top:459.45px">C3</div><div class="m ds" style="top:459.45px"><span class="cc">ret</span></div>
<div class="m ad" style="top:469.85px">000000000040167E</div><div class="m by bp" style="left:206.3px;top:469.85px">55</div><div class="m ds" style="top:469.85px"><span class="p">push</span> <span class="r">rbp</span></div>
<div class="m ad" style="top:480.25px">000000000040167F</div><div class="m by bp" style="left:206.3px;top:480.25px">48</div><div class="m by" style="left:225.5px;top:480.25px">89</div><div class="m by" style="left:244.7px;top:480.25px">E5</div><div class="m ds" style="top:480.25px">mov <span class="r">rbp</span>,<span class="r">rsp</span></div>
<div class="m ad" style="top:490.65px">0000000000401682</div><div class="m by bp" style="left:206.3px;top:490.65px">48</div><div class="m by" style="left:225.5px;top:490.65px">83</div><div class="m by" style="left:244.7px;top:490.65px">EC</div><div class="m by bp" style="left:263.9px;top:490.65px">20</div><div class="m ds" style="top:490.65px">sub <span class="r">rsp</span>,<span class="v">20</span></div>
<div class="m ds" style="top:501.05px">mov <span class="z">dword ptr</span> <span class="g">ss</span>:<span class="sb">[</span><span class="mb">rbp</span><span class="mo">+</span><span class="v">10</span><span class="sb">]</span>,<span class="r">ecx</span></div>
</div>
<div class="dot" style="top:87.15px"></div><div class="dot" style="top:97.55px"></div><div class="dot" style="top:107.95px"></div><div class="dot" style="top:118.35px;background:#ff0000"></div><div class="dot" style="top:128.75px"></div><div class="dot" style="top:139.15px"></div><div class="dot" style="top:149.55px"></div><div class="dot" style="top:159.95px"></div><div class="dot" style="top:170.35px"></div><div class="dot" style="top:180.75px"></div><div class="dot" style="top:191.15px"></div><div class="dot" style="top:201.55px"></div><div class="dot" style="top:211.95px"></div><div class="dot" style="top:222.35px"></div><div class="dot" style="top:232.75px"></div><div class="dot" style="top:243.15px"></div><div class="dot" style="top:253.55px"></div><div class="dot" style="top:263.95px"></div><div class="dot" style="top:274.35px"></div><div class="dot" style="top:284.75px"></div><div class="dot" style="top:295.15px"></div><div class="dot" style="top:305.55px"></div><div class="dot" style="top:315.95px"></div><div class="dot" style="top:326.35px"></div><div class="dot" style="top:336.75px"></div><div class="dot" style="top:347.15px"></div><div class="dot" style="top:357.55px"></div><div class="dot" style="top:367.95px"></div><div class="dot" style="top:378.35px"></div><div class="dot" style="top:388.75px"></div><div class="dot" style="top:399.15px"></div><div class="dot" style="top:409.55px"></div><div class="dot" style="top:419.95px"></div><div class="dot" style="top:430.35px"></div><div class="dot" style="top:440.75px"></div><div class="dot" style="top:451.15px"></div><div class="dot" style="top:461.55px"></div><div class="dot" style="top:471.95px"></div><div class="dot" style="top:482.35px"></div><div class="dot" style="top:492.75px"></div><div class="dot" style="top:503.15px"></div>
<svg style="left:0;top:0" width="71" height="522" viewBox="0 0 71 522"><g fill="none" stroke="#909090" stroke-width="1.1"><path d="M60.5 111.05 H20 V339.85 H59"/><path d="M60.5 267.05 H37.5 V339.85"/><path d="M55.4 337.25 L59.2 339.85 L55.4 342.45"/></g><g fill="none" stroke="#ff0000" stroke-width="1.55"><path d="M28 194.25 H60.5" stroke-dasharray="8.2 1.9"/><path d="M28.8 194.25 V278.15" stroke-dasharray="8.4 2"/><path d="M28.8 277.45 H57" stroke-dasharray="7.2 2"/><path d="M55.2 273.45 L59.6 277.45 L55.2 281.45"/></g><rect x="1.9" y="272.25" width="19.6" height="10.4" fill="#4040ff"/><g fill="none" stroke="#4040ff" stroke-width="1.5"><path d="M21 277.45 H28.6 M24.8 273.45 L29 277.45 L24.8 281.45"/></g><text x="2.4" y="280.65" font-family='"Liberation Mono","DejaVu Sans Mono",monospace' font-size="10.667" fill="#f4f0ff" textLength="18.6" lengthAdjust="spacingAndGlyphs">RIP</text></svg>
<svg style="left:270px;top:170px" width="80" height="32" viewBox="270 170 80 32"><g fill="none" stroke="#ff0000" stroke-width="1.9" stroke-linecap="round" stroke-linejoin="round"><path d="M278.5 186.2 C295 187.2 318 185.4 340.8 185.4"/><path d="M322.6 177 C329 177.6 336.5 181 341 185.3 C334 188.5 326.5 191.5 321.5 194.4"/></g></svg>
<div style="left:866.2px;top:85.2px;width:15.4px;height:433.6px;background:#f0f0f0"></div>
<div style="left:866.2px;top:103px;width:14.4px;height:16.8px;background:#cdcdcd"></div>
<svg style="left:866.2px;top:85px" width="15" height="434" viewBox="0 0 15 434"><g fill="none" stroke="#444" stroke-width="1.35"><path d="M3.6 10.6 L7.4 6.6 L11.2 10.6"/><path d="M3.6 405.8 L7.4 409.8 L11.2 405.8"/></g></svg>
<div style="left:71px;top:502.6px;width:795.2px;height:16.2px;background:#f0f0f0"></div>
<div style="left:87.5px;top:502.6px;width:394.3px;height:16.2px;background:#cdcdcd"></div>
<svg style="left:71px;top:502.6px" width="796" height="16" viewBox="0 0 796 16"><g fill="none" stroke="#444" stroke-width="1.35"><path d="M10.4 4.2 L6.4 8 L10.4 11.8"/><path d="M783.6 4.2 L787.6 8 L783.6 11.8"/></g></svg>
<div style="left:884px;top:84.7px;width:651.4px;height:16.4px;background:#e1e1e1;border:0.85px solid #b0b0b0;box-sizing:border-box"></div>
<div class="m" style="left:892.3px;top:87.6px;font-size:10.667px">Hide FPU</div>
<div id="regs" style="left:883.4px;top:101px;width:652.6px;height:400.8px;background:#fff8f0;border-left:1.2px solid #6a6a6a;border-top:2.3px solid #b7b7bd;box-sizing:border-box"></div>
<div style="left:884.6px;top:102.7px;width:644px;height:391.2px;overflow:hidden"><div style="left:-884.6px;top:-102.7px;width:1536px;height:522px">
<div style="left:928.6px;top:106.9px;width:102.8px;height:10.4px;background:#ececec"></div>
<div class="rg" style="top:106.55px">RAX   0000000000000000</div>
<div class="rg" style="top:117.75px">RBX   0000000000000010</div>
<div class="rg" style="top:128.95px"><span style="color:#008300">RCX</span>   0000000002CF1760     "pass123"</div>
<div class="rg" style="top:140.15px"><span style="color:#008300;text-decoration:underline;text-decoration-color:#8a8a00;text-decoration-thickness:1.1px;text-underline-offset:1px">RDX</span>   44524F5753534150</div>
<div class="rg" style="top:151.35px">RBP   00000000006EFE50</div>
<div class="rg" style="top:162.55px">RSP   00000000006EFE20     &amp;"pass123"</div>
<div class="rg" style="top:173.75px">RSI   0000000000000008</div>
<div class="rg" style="top:184.95px">RDI   0000000002CF1680     &amp;"C:\\Users\\Paranoid Ninja\\Documents\\personal\\scriptdotsh.com\\my_blo</div>
<div class="rg" style="top:207.35px"><span style="color:#008300">R8</span>    0000000002CF1D30     &amp;"ALLUSERSPROFILE=C:\\ProgramData"</div>
<div class="rg" style="top:218.55px"><span style="color:#008300">R9</span>    FFFFFFFFFD9FE6A6</div>
<div class="rg" style="top:229.75px">R10   0000000000000000</div>
<div class="rg" style="top:240.95px">R11   8101010101010100</div>
<div class="rg" style="top:252.15px">R12   0000000000000018</div>
<div class="rg" style="top:263.35px">R13   0000000000000010</div>
<div class="rg" style="top:274.55px">R14   0000000000000000</div>
<div class="rg" style="top:285.75px">R15   0000000000000000</div>
<div class="rg" style="top:308.15px">RIP   <span style="color:#f02020">0000000000401636</span>     crack_mex64.0000000000401636</div>
<div class="rg" style="top:330.55px">RFLAGS   0000000000000297</div>
<div class="rg" style="top:341.75px">ZF 0  PF 1  AF 1</div>
<div class="rg" style="top:352.95px">OF 0  SF 1  DF 0</div>
<div class="rg" style="top:364.15px">CF 1  TF 0  IF 1</div>
<div class="rg" style="top:386.55px">LastError  00000000 (ERROR_SUCCESS)</div>
<div class="rg" style="top:397.75px">LastStatus C000000D (STATUS_INVALID_PARAMETER)</div>
<div class="rg" style="top:420.15px">GS 002B  FS 0053</div>
<div class="rg" style="top:431.35px">ES 002B  <span style="text-decoration:underline;text-decoration-color:#00a000;text-decoration-thickness:1.1px;text-underline-offset:1px">DS</span> 002B</div>
<div class="rg" style="top:442.55px">CS 0033  SS 002B</div>
<div class="rg" style="top:464.95px">x87r0 00000000000000000000 ST0 Empty 0.000000000000000000</div>
<div class="rg" style="top:476.15px">x87r1 00000000000000000000 ST1 Empty 0.000000000000000000</div>
<div class="rg" style="top:487.35px">x87r2 00000000000000000000 ST2 Empty 0.000000000000000000</div>
</div></div>
<div style="left:1528.4px;top:102.7px;width:7.6px;height:399px;background:#f0f0f0;border-left:0.8px solid #b8b8b8;box-sizing:border-box"></div>
<div style="left:1530.2px;top:104.6px;width:4.5px;height:114.2px;background:#a6a6a6"></div>
<div style="left:884.6px;top:493.9px;width:643.8px;height:7.6px;background:#f4f4f4;border:0.8px solid #b8b8b8;box-sizing:border-box"></div>
<div style="left:886px;top:496px;width:515.5px;height:3.9px;background:#a6a6a6"></div>
<div style="left:884px;top:503.2px;width:554px;height:16.6px;background:#e1e1e1;border:0.8px solid #adadad;box-sizing:border-box"></div>
<div class="ui fx" id="combo" style="transform:scaleX(1.016);left:886.6px;top:506.9px;font-size:10.2px;line-height:12px">Default (x64 fastcall)</div>
<svg style="left:1427px;top:509px" width="8" height="5" viewBox="0 0 8 5"><path d="M0.8 0.8 H6.8 L3.8 4 Z" fill="#000"/></svg>
<div style="left:1441.2px;top:503.8px;width:29.3px;height:15.6px;background:#fff;border:0.8px solid #7a7a7a;box-sizing:border-box"></div>
<div style="left:1458.2px;top:504.6px;width:11.5px;height:14px;background:#e6e6e6"></div>
<div class="ui" style="left:1443.2px;top:506.9px;font-size:10.2px;line-height:12px">5</div>
<svg style="left:1459px;top:505px" width="10" height="14" viewBox="0 0 10 14"><path d="M2.2 5.2 L5 2.2 L7.8 5.2 Z M2.2 8.4 L5 11.4 L7.8 8.4 Z" fill="#000"/></svg>
<div style="left:1473.4px;top:505px;width:13px;height:13px;background:#fff;border:0.9px solid #333;box-sizing:border-box"></div>
<div class="ui fx" id="unl" style="transform:scaleX(0.972);left:1491px;top:506.9px;font-size:10.2px;line-height:12px">Unlocked</div>
<div style="left:0;top:520.2px;width:884px;height:1.8px;background:#e6e6e6"></div>
<div style="left:884px;top:520.3px;width:652px;height:1.7px;background:#bdbdbd"></div>
<div style="left:1492px;top:520.6px;width:44px;height:1.4px;background:#9c9c9c"></div>
<div style="left:14.6px;top:520.6px;width:0.9px;height:1.4px;background:#555"></div>
</body></html>
